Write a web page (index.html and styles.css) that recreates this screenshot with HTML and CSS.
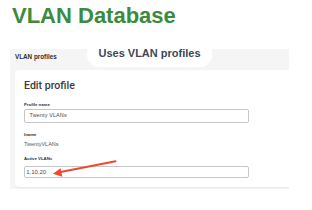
FILE: index.html
```html
<!DOCTYPE html>
<html>
<head>
<meta charset="utf-8">
<link rel="stylesheet" href="styles.css">
</head>
<body>
<div class="page">
  <h1 class="title">VLAN Database</h1>
  <section class="panel">
    <div class="panel-head">VLAN profiles</div>
    <div class="card">
      <h2 class="card-title">Edit profile</h2>
      <div class="label label-first">Profile name</div>
      <div class="input">Twenty VLANs</div>
      <div class="label">Iname</div>
      <div class="value">TwentyVLANs</div>
      <div class="label">Active VLANs</div>
      <div class="input input-tight">1,10,20</div>
    </div>
  </section>
  <div class="callout">Uses VLAN profiles</div>
  <svg class="arrow" width="312" height="210" viewBox="0 0 312 210">
    <line x1="115.5" y1="161.2" x2="58" y2="172.6" stroke="#ee4a2b" stroke-width="2" stroke-linecap="round"/>
    <polygon points="53,173.8 60.5,168.3 62.3,176.8" fill="#ee4a2b"/>
  </svg>
</div>
</body>
</html>
```
FILE: styles.css
```css
html, body {
  margin: 0;
  padding: 0;
  background: #ffffff;
}
.page {
  position: relative;
  width: 312px;
  height: 210px;
  overflow: hidden;
  font-family: "Liberation Sans", Arial, sans-serif;
}
.title {
  margin: 0;
  padding: 3px 0 0 12px;
  height: 49px;
  box-sizing: border-box;
  font-size: 22px;
  line-height: 25px;
  font-weight: bold;
  color: #3a8b3d;
}
.panel {
  margin-left: 10px;
  width: 279px;
  background: #f5f5f5;
  padding: 0 0 2.5px 5px;
  box-sizing: border-box;
}
.panel-head {
  height: 21px;
  padding-top: 4px;
  box-sizing: border-box;
  font-size: 6.3px;
  line-height: 8px;
  font-weight: bold;
  color: #2b2f36;
}
.card {
  background: #ffffff;
  border-radius: 4px 0 0 4px;
  padding: 9.6px 0 8.8px 9px;
  box-shadow: 0 0.5px 1px rgba(0,0,0,0.05);
}
.card-title {
  margin: 0;
  font-family: Roboto, "Liberation Sans", sans-serif;
  font-size: 10.6px;
  line-height: 12px;
  font-weight: 500;
  color: #3a3c40;
}
.label {
  margin-top: 8.8px;
  font-size: 4.3px;
  line-height: 6px;
  font-weight: bold;
  color: #2e3136;
}
.label-first {
  margin-top: 10px;
}
.input {
  margin-top: 1.8px;
  width: 225px;
  height: 13.4px;
  box-sizing: border-box;
  border: 1px solid #c6c7cc;
  border-radius: 2px;
  padding-left: 4.5px;
  font-size: 5.5px;
  line-height: 11.4px;
  color: #4a4c50;
  letter-spacing: 0.1px;
}
.input-tight {
  margin-top: 3.2px;
  height: 12.6px;
  line-height: 10.6px;
  padding-left: 1.2px;
  font-size: 6px;
  letter-spacing: 0;
}
.value {
  margin-top: 3px;
  font-size: 5.5px;
  line-height: 7px;
  color: #55585d;
}
.callout {
  position: absolute;
  left: 87px;
  top: 40px;
  width: 125px;
  height: 27px;
  border-radius: 12px;
  background: #ffffff;
  font-size: 11px;
  line-height: 27px;
  font-weight: bold;
  text-align: center;
  color: #3d4759;
  padding-bottom: 0;
  box-sizing: border-box;
}
.arrow {
  position: absolute;
  left: 0;
  top: 0;
}
```
